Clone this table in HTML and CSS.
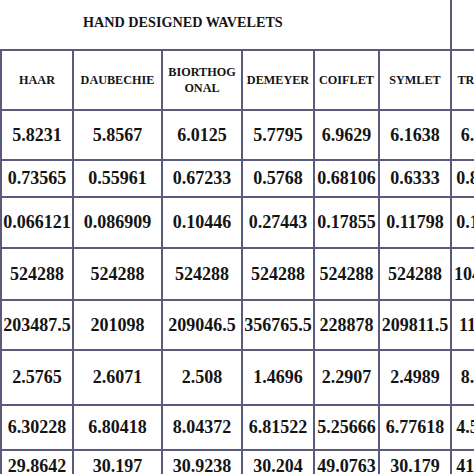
FILE: index.html
```html
<!DOCTYPE html>
<html>
<head>
<meta charset="utf-8">
<link rel="stylesheet" href="styles.css">
</head>
<body>
<div class="page">
  <div class="title-row">
    <div class="title">HAND DESIGNED WAVELETS</div>
  </div>
  <div class="grid">
    <div class="cell head">HAAR</div>
    <div class="cell head">DAUBECHIE</div>
    <div class="cell head">BIORTHOG<br>ONAL</div>
    <div class="cell head">DEMEYER</div>
    <div class="cell head">COIFLET</div>
    <div class="cell head">SYMLET</div>
    <div class="cell head">TRAINED</div>

    <div class="cell">5.8231</div><div class="cell">5.8567</div><div class="cell">6.0125</div><div class="cell">5.7795</div><div class="cell">6.9629</div><div class="cell">6.1638</div><div class="cell">6.4715</div>
    <div class="cell">0.73565</div><div class="cell">0.55961</div><div class="cell">0.67233</div><div class="cell">0.5768</div><div class="cell">0.68106</div><div class="cell">0.6333</div><div class="cell">0.85512</div>
    <div class="cell">0.066121</div><div class="cell">0.086909</div><div class="cell">0.10446</div><div class="cell">0.27443</div><div class="cell">0.17855</div><div class="cell">0.11798</div><div class="cell">0.13427</div>
    <div class="cell">524288</div><div class="cell">524288</div><div class="cell">524288</div><div class="cell">524288</div><div class="cell">524288</div><div class="cell">524288</div><div class="cell">1048576</div>
    <div class="cell">203487.5</div><div class="cell">201098</div><div class="cell">209046.5</div><div class="cell">356765.5</div><div class="cell">228878</div><div class="cell">209811.5</div><div class="cell">118430</div>
    <div class="cell">2.5765</div><div class="cell">2.6071</div><div class="cell">2.508</div><div class="cell">1.4696</div><div class="cell">2.2907</div><div class="cell">2.4989</div><div class="cell">8.1923</div>
    <div class="cell">6.30228</div><div class="cell">6.80418</div><div class="cell">8.04372</div><div class="cell">6.81522</div><div class="cell">5.25666</div><div class="cell">6.77618</div><div class="cell">4.52841</div>
    <div class="cell">29.8642</div><div class="cell">30.197</div><div class="cell">30.9238</div><div class="cell">30.204</div><div class="cell">49.0763</div><div class="cell">30.179</div><div class="cell">41.3726</div>
  </div>
</div>
</body>
</html>
```

FILE: styles.css
```css
html, body {
  margin: 0;
  padding: 0;
  background: #ffffff;
  overflow: hidden;
}
.page {
  width: 474px;
  height: 474px;
  overflow: hidden;
  font-family: "Liberation Serif", "Times New Roman", serif;
  font-weight: bold;
  color: #141414;
}
.title-row {
  display: flex;
  height: 49px;
}
.title {
  width: 450px;
  flex: none;
  border-right: 2px solid #5b5a7c;
  box-sizing: content-box;
  display: flex;
  align-items: center;
  padding-left: 83px;
  margin-left: -83px;
  padding-bottom: 5px;
  box-sizing: border-box;
  width: 452px;
  margin-left: 0;
  font-size: 14.2px;
  letter-spacing: 0;
}
.grid {
  display: grid;
  width: max-content;
  background: #5b5a7c;
  padding: 2px 0 2px 2px;
  gap: 2px;
  grid-template-columns: 70px 87px 78px 70px 63px 70px 67px;
  grid-template-rows: 58px 48px 35px 49px 50px 48px 53px 43px 30px;
}
.cell {
  background: #ffffff;
  display: flex;
  align-items: center;
  justify-content: center;
  text-align: center;
  font-size: 18px;
  white-space: nowrap;
  overflow: visible;
}
.head {
  font-size: 12.2px;
  line-height: 16px;
}
```
